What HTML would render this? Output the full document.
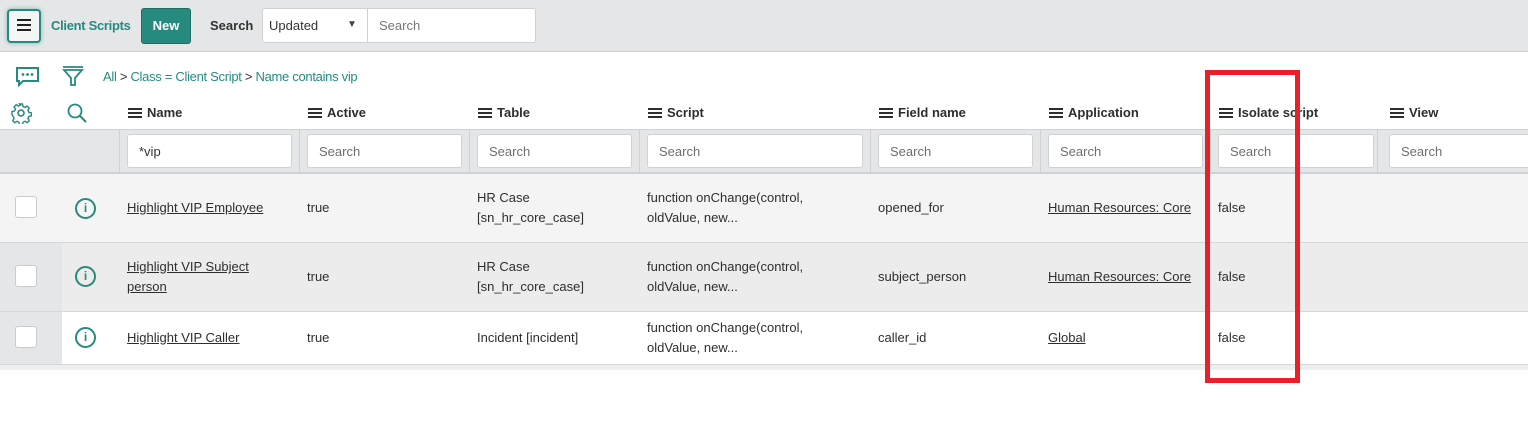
<!DOCTYPE html>
<html><head><meta charset="utf-8"><style>
*{box-sizing:border-box;margin:0;padding:0}
body{width:1528px;height:448px;background:#fff;font-family:"Liberation Sans",sans-serif;font-size:13px;color:#2e2e2e;position:relative;overflow:hidden}
.a{position:absolute}
.top{left:0;top:0;width:1528px;height:52px;background:#e4e6e7;border-bottom:1px solid #c8cacc}
.inp{position:absolute;background:#fff;border:1px solid #cfd2d4;border-radius:3px;height:34px;padding:0 11px;line-height:34px;color:#6b6f72;font-size:13px}
.hd{position:absolute;top:105px;font-weight:bold;font-size:13px;color:#2e2e2e}
.hd:before{content:"";display:inline-block;width:14px;height:10px;margin-right:5px;vertical-align:-1px;background:linear-gradient(#2e2e2e 0 2px,transparent 2px 4px,#2e2e2e 4px 6px,transparent 6px 8px,#2e2e2e 8px 10px)}
.frow{left:0;top:129px;width:1528px;height:45px;background:#e4e6e7;border-top:1px solid #cfd2d4;border-bottom:2px solid #cfd2d4}
.row{left:0;width:1528px;border-bottom:1px solid #d5d7d9}
.cb{position:absolute;left:15px;width:22px;height:22px;background:#fff;border:1px solid #c9cbcd;border-radius:3px}
.info{position:absolute;left:75px;width:21px;height:21px;border:2px solid #278a7f;border-radius:50%;color:#278a7f;text-align:center;font-size:12px;font-weight:bold;line-height:17px;font-family:"Liberation Sans",sans-serif}
.t{position:absolute;line-height:20px}
u{text-decoration:underline}
.sep{position:absolute;top:130px;width:1px;height:42px;background:#cfd2d4}
</style></head><body>
<div class="a top"></div>
<div class="a" style="left:7px;top:9px;width:34px;height:34px;border:2px solid #278a7f;border-radius:4px;background:#f4f5f5;box-shadow:0 0 4px #7ab8b0"></div>
<div class="a" style="left:17px;top:19px;width:14px;height:12px;background:linear-gradient(#222 0 2px,transparent 2px 5px,#222 5px 7px,transparent 7px 10px,#222 10px 12px)"></div>
<div class="a" style="left:51px;top:18px;color:#278a7f;font-weight:bold;font-size:13px;letter-spacing:-0.3px">Client Scripts</div>
<div class="a" style="left:141px;top:8px;width:50px;height:36px;background:#278a7f;border:1px solid #1d6d64;border-radius:3px;color:#fff;font-weight:bold;text-align:center;line-height:34px">New</div>
<div class="a" style="left:210px;top:18px;font-weight:bold;color:#333">Search</div>
<div class="a" style="left:262px;top:8px;width:274px;height:35px;background:#fff;border:1px solid #cfd2d4;border-radius:3px"></div>
<div class="a" style="left:367px;top:9px;width:1px;height:33px;background:#cfd2d4"></div>
<div class="a" style="left:269px;top:18px;color:#333">Updated</div>
<div class="a" style="left:347px;top:19px;font-size:10px;color:#444">▼</div>
<div class="a" style="left:379px;top:18px;color:#777">Search</div>

<svg class="a" style="left:15px;top:66px" width="26" height="22" viewBox="0 0 26 22"><path d="M2 2h21v13H8l-4 4v-4H2z" fill="none" stroke="#278a7f" stroke-width="2"/><circle cx="8" cy="8.5" r="1.4" fill="#278a7f"/><circle cx="12.5" cy="8.5" r="1.4" fill="#278a7f"/><circle cx="17" cy="8.5" r="1.4" fill="#278a7f"/></svg>
<svg class="a" style="left:60px;top:64px" width="26" height="26" viewBox="0 0 26 26"><path d="M3 3h20M4 6h18l-7 8v7h-4v-7z" fill="none" stroke="#278a7f" stroke-width="1.8"/></svg>
<div class="a" style="left:103px;top:69px;color:#278a7f;letter-spacing:-0.3px">All <span style="color:#333">&gt;</span> Class = Client Script <span style="color:#333">&gt;</span> Name contains vip</div>
<svg class="a" style="left:10px;top:102px" width="22" height="22" viewBox="0 0 22 22"><circle cx="11" cy="11" r="3" fill="none" stroke="#278a7f" stroke-width="1.6"/><path d="M9.5 2h3l.5 2.5 2 1 2.2-1.4 2.1 2.1-1.4 2.2 1 2 2.5.5v3l-2.5.5-1 2 1.4 2.2-2.1 2.1-2.2-1.4-2 1-.5 2.5h-3l-.5-2.5-2-1-2.2 1.4-2.1-2.1 1.4-2.2-1-2L2 12.5v-3l2.5-.5 1-2-1.4-2.2 2.1-2.1 2.2 1.4 2-1z" fill="none" stroke="#278a7f" stroke-width="1.4"/></svg>
<svg class="a" style="left:66px;top:102px" width="22" height="22" viewBox="0 0 22 22"><circle cx="9" cy="9" r="6.5" fill="none" stroke="#278a7f" stroke-width="1.8"/><path d="M14 14l6 6" stroke="#278a7f" stroke-width="2"/></svg>

<div class="hd" style="left:128px">Name</div>
<div class="hd" style="left:308px">Active</div>
<div class="hd" style="left:478px">Table</div>
<div class="hd" style="left:648px">Script</div>
<div class="hd" style="left:879px">Field name</div>
<div class="hd" style="left:1049px">Application</div>
<div class="hd" style="left:1219px">Isolate script</div>
<div class="hd" style="left:1390px">View</div>

<div class="a frow"></div>
<div class="sep" style="left:119px"></div><div class="sep" style="left:299px"></div><div class="sep" style="left:469px"></div><div class="sep" style="left:639px"></div><div class="sep" style="left:870px"></div><div class="sep" style="left:1040px"></div><div class="sep" style="left:1210px"></div><div class="sep" style="left:1377px"></div>
<div class="inp" style="left:127px;top:134px;width:165px;color:#333">*vip</div>
<div class="inp" style="left:307px;top:134px;width:155px">Search</div>
<div class="inp" style="left:477px;top:134px;width:155px">Search</div>
<div class="inp" style="left:647px;top:134px;width:216px">Search</div>
<div class="inp" style="left:878px;top:134px;width:155px">Search</div>
<div class="inp" style="left:1048px;top:134px;width:155px">Search</div>
<div class="inp" style="left:1218px;top:134px;width:156px">Search</div>
<div class="inp" style="left:1389px;top:134px;width:150px">Search</div>

<div class="a row" style="top:174px;height:69px;background:#f4f4f4"></div>
<div class="a row" style="top:243px;height:69px;background:#ececec"></div>
<div class="a" style="left:0;top:243px;width:62px;height:68px;background:#e4e6e7"></div>
<div class="a row" style="top:312px;height:53px;background:#fff"></div>
<div class="a" style="left:0;top:312px;width:62px;height:52px;background:#e4e6e7"></div>
<div class="a" style="left:0;top:365px;width:1528px;height:5px;background:#eceeef"></div>

<div class="cb" style="top:196px"></div><div class="info" style="top:198px">i</div>
<div class="t" style="left:127px;top:198px"><u>Highlight VIP Employee</u></div>
<div class="t" style="left:307px;top:198px">true</div>
<div class="t" style="left:477px;top:188px">HR Case<br>[sn_hr_core_case]</div>
<div class="t" style="left:647px;top:188px">function onChange(control,<br>oldValue, new...</div>
<div class="t" style="left:878px;top:198px">opened_for</div>
<div class="t" style="left:1048px;top:198px"><u>Human Resources: Core</u></div>
<div class="t" style="left:1218px;top:198px">false</div>

<div class="cb" style="top:265px"></div><div class="info" style="top:266px">i</div>
<div class="t" style="left:127px;top:257px"><u>Highlight VIP Subject</u><br><u>person</u></div>
<div class="t" style="left:307px;top:267px">true</div>
<div class="t" style="left:477px;top:257px">HR Case<br>[sn_hr_core_case]</div>
<div class="t" style="left:647px;top:257px">function onChange(control,<br>oldValue, new...</div>
<div class="t" style="left:878px;top:267px">subject_person</div>
<div class="t" style="left:1048px;top:267px"><u>Human Resources: Core</u></div>
<div class="t" style="left:1218px;top:267px">false</div>

<div class="cb" style="top:326px"></div><div class="info" style="top:327px">i</div>
<div class="t" style="left:127px;top:328px"><u>Highlight VIP Caller</u></div>
<div class="t" style="left:307px;top:328px">true</div>
<div class="t" style="left:477px;top:328px">Incident [incident]</div>
<div class="t" style="left:647px;top:318px">function onChange(control,<br>oldValue, new...</div>
<div class="t" style="left:878px;top:328px">caller_id</div>
<div class="t" style="left:1048px;top:328px"><u>Global</u></div>
<div class="t" style="left:1218px;top:328px">false</div>

<div class="a" style="left:1205px;top:70px;width:95px;height:313px;border:5px solid #e8202a"></div>
</body></html>
